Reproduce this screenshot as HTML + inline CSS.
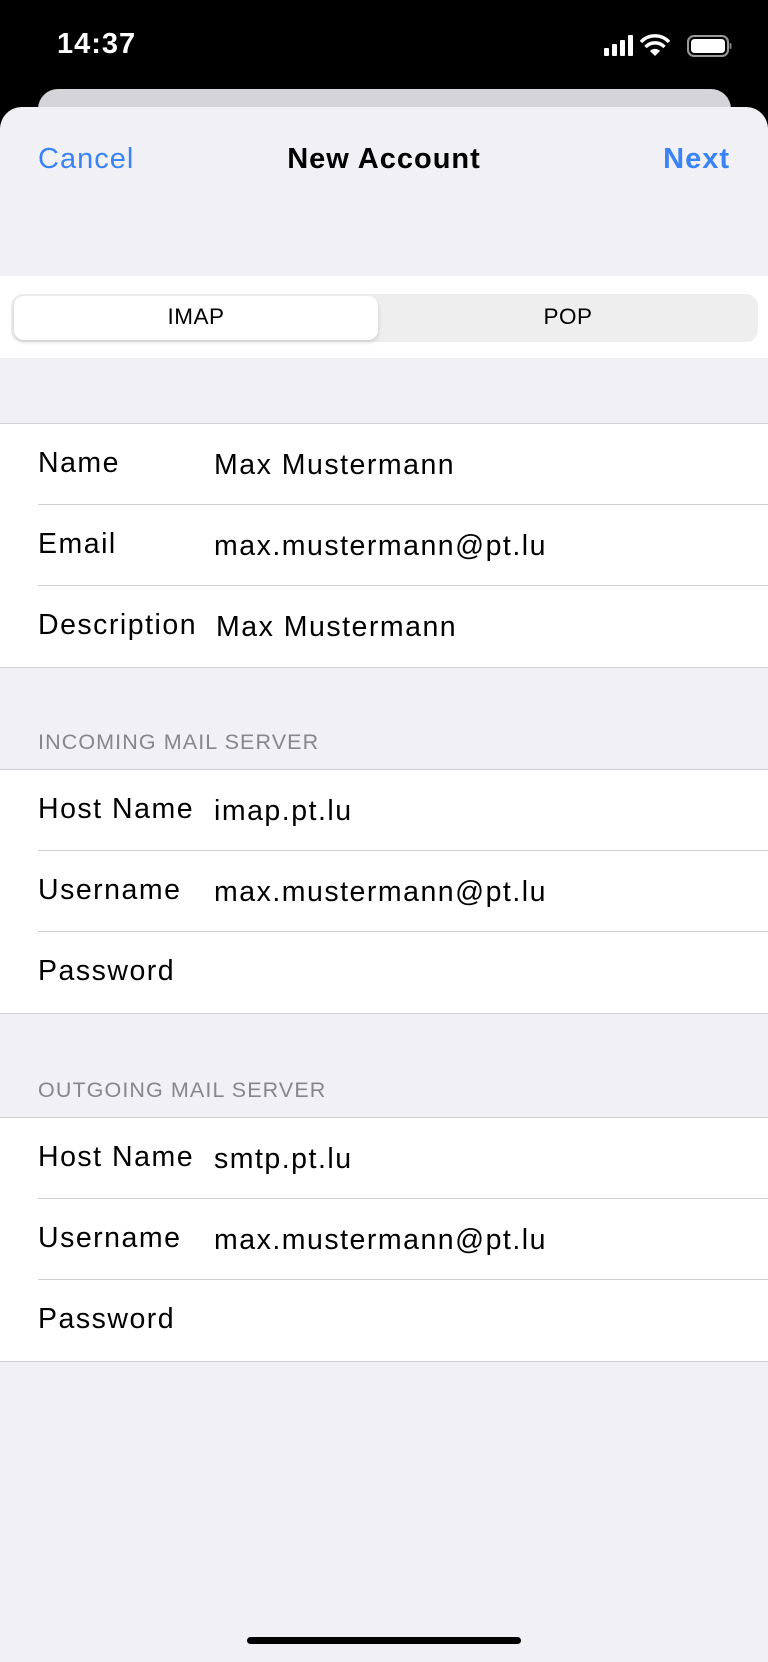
<!DOCTYPE html>
<html><head><meta charset="utf-8"><style>
*{margin:0;padding:0;box-sizing:border-box}
body{width:768px;height:1662px;background:#000;font-family:"Liberation Sans",sans-serif;position:relative;overflow:hidden}
.abs{position:absolute}
.sheet{left:0;top:107px;width:768px;height:1555px;background:#f1f1f5;border-radius:22px 22px 0 0}
.back{left:38px;top:89px;width:693px;height:40px;background:#d4d4d9;border-radius:20px 20px 0 0}
.nav{font-size:29px;top:143px;letter-spacing:1px}
.grp{left:0;width:768px;background:#fff;border-top:1px solid #d0d0d4;border-bottom:1px solid #d0d0d4}
.row{height:81px;position:relative;font-size:28.5px;color:#000;letter-spacing:1.5px}
.row .l{position:absolute;left:38px;top:23px}
.row .v{position:absolute;left:214px;top:25px}
.row.sep::after{content:"";position:absolute;left:38px;right:0;bottom:0;height:1px;background:#d0d0d4}
.hdr{left:38px;font-size:21.5px;color:#86868b;letter-spacing:1.1px}
</style></head><body>
<div class="abs" style="left:57px;top:28px;color:#fff;font-size:29px;font-weight:bold;letter-spacing:1px">14:37</div>
<svg class="abs" style="left:602px;top:34px" width="130" height="24" viewBox="0 0 130 24">
<rect x="2" y="14" width="5" height="8" rx="1" fill="#fff"/><rect x="10" y="10" width="5" height="12" rx="1" fill="#fff"/><rect x="18" y="6" width="5" height="16" rx="1" fill="#fff"/><rect x="26" y="1" width="5" height="21" rx="1" fill="#fff"/>
<path d="M53 22 l-5 -5 a7 7 0 0 1 10 0z" fill="#fff"/><path d="M43.5 13 a13 13 0 0 1 19 0" stroke="#fff" stroke-width="3.4" fill="none"/><path d="M39 8 a19 19 0 0 1 28 0" stroke="#fff" stroke-width="3.4" fill="none"/>
<rect x="86" y="2" width="40" height="20" rx="6" fill="none" stroke="#fff" stroke-opacity=".6" stroke-width="2"/><rect x="89" y="5" width="34" height="14" rx="3.5" fill="#fff"/><rect x="127.5" y="9" width="2" height="6" rx="1" fill="#fff" fill-opacity=".5"/>
</svg>
<div class="abs back"></div>
<div class="abs sheet"></div>
<div class="abs nav" style="left:38px;color:#3a82f7">Cancel</div>
<div class="abs nav" style="left:0;width:768px;text-align:center;font-weight:bold;color:#000">New Account</div>
<div class="abs nav" style="right:38px;color:#3a82f7;font-weight:bold">Next</div>
<div class="abs" style="left:0;top:276px;width:768px;height:82px;background:#fff"></div>
<div class="abs" style="left:11px;top:294px;width:747px;height:48px;background:#eeeeef;border-radius:12px"></div>
<div class="abs" style="left:14px;top:296px;width:364px;height:44px;background:#fff;border-radius:10px;box-shadow:0 2px 4px rgba(0,0,0,.15)"></div>
<div class="abs" style="left:14px;top:304px;width:364px;text-align:center;font-size:22.5px;letter-spacing:.5px">IMAP</div>
<div class="abs" style="left:378px;top:304px;width:380px;text-align:center;font-size:22.5px;letter-spacing:.5px">POP</div>

<div class="abs grp" style="top:423px">
<div class="row sep"><span class="l">Name</span><span class="v">Max Mustermann</span></div>
<div class="row sep"><span class="l">Email</span><span class="v">max.mustermann@pt.lu</span></div>
<div class="row"><span class="l">Description</span><span class="v" style="left:216px">Max Mustermann</span></div>
</div>
<div class="abs hdr" style="top:730px">INCOMING MAIL SERVER</div>
<div class="abs grp" style="top:769px">
<div class="row sep"><span class="l">Host Name</span><span class="v">imap.pt.lu</span></div>
<div class="row sep"><span class="l">Username</span><span class="v">max.mustermann@pt.lu</span></div>
<div class="row"><span class="l">Password</span></div>
</div>
<div class="abs hdr" style="top:1078px">OUTGOING MAIL SERVER</div>
<div class="abs grp" style="top:1117px">
<div class="row sep"><span class="l">Host Name</span><span class="v">smtp.pt.lu</span></div>
<div class="row sep"><span class="l">Username</span><span class="v">max.mustermann@pt.lu</span></div>
<div class="row"><span class="l">Password</span></div>
</div>
<div class="abs" style="left:247px;top:1637px;width:274px;height:7px;border-radius:4px;background:#000"></div>
</body></html>
